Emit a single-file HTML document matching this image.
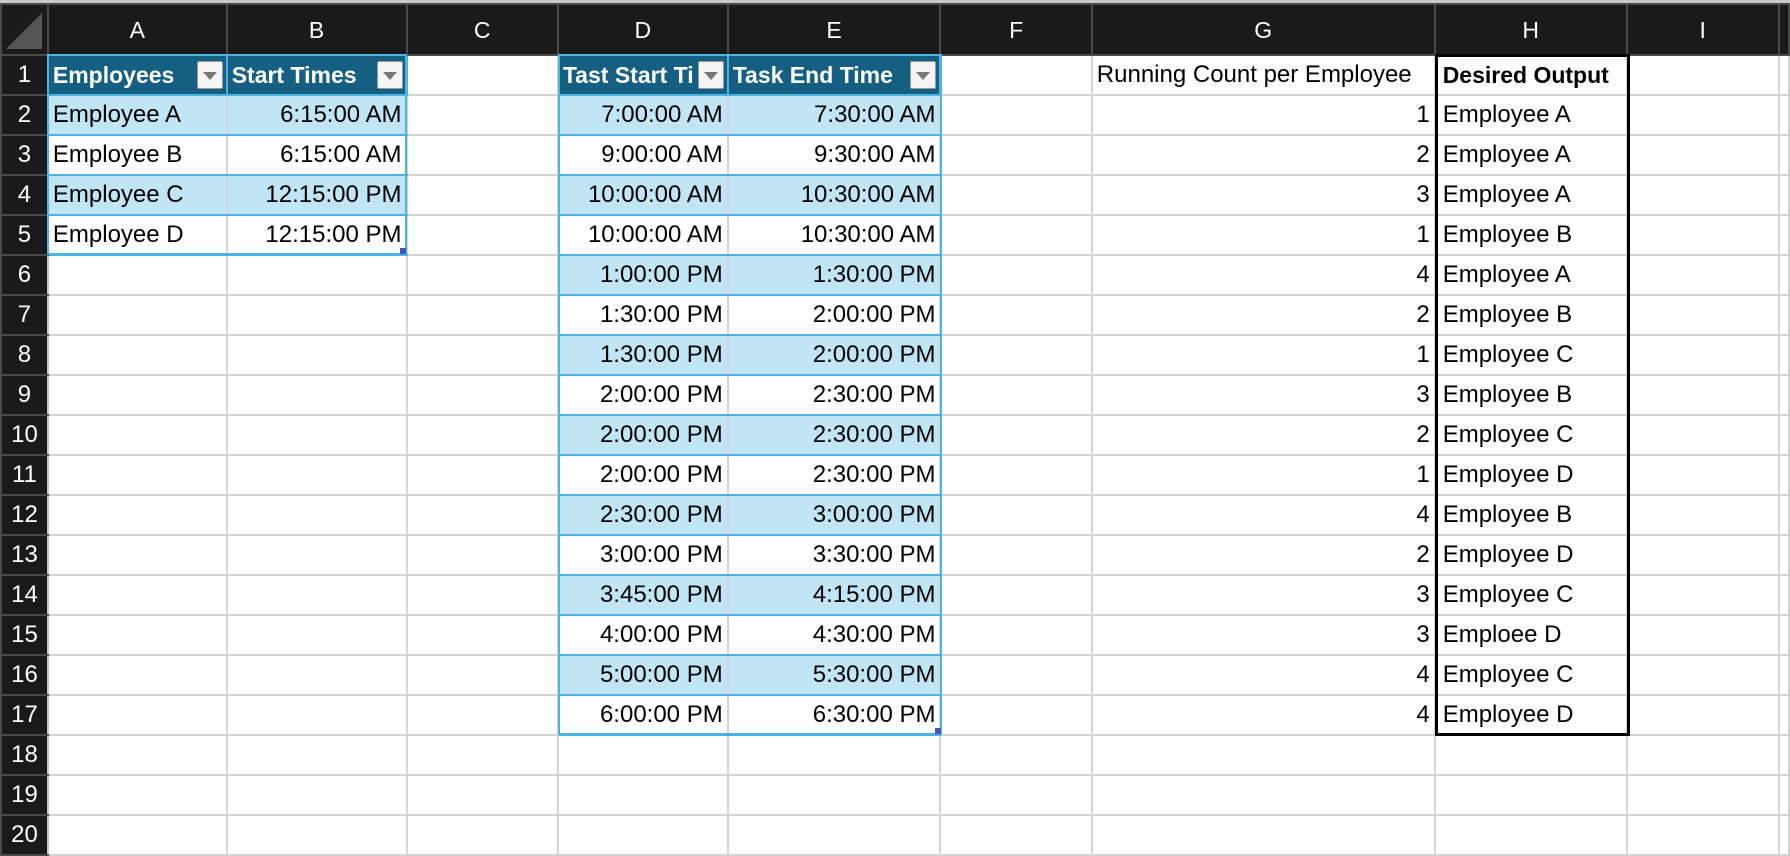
<!DOCTYPE html>
<html><head><meta charset="utf-8"><style>
body{margin:0;width:1790px;height:822px;overflow:hidden;background:#fff;font-family:"Liberation Sans Narrow","Liberation Sans",sans-serif;font-size:24px;color:#000;position:relative}
.topband{position:absolute;left:0;top:0;width:1790px;height:3px;background:#c8c8c8}
table{position:absolute;left:0;top:3px;border-collapse:collapse;table-layout:fixed}
td{border:2px solid #d4d4d4;height:38px;padding:0 4px;white-space:nowrap;overflow:hidden;line-height:38px;box-sizing:border-box}
tr{height:40px}
tr.h{height:51px}
tr.h td{background:#1a1a1a;color:#fff;border:2px solid #4a4a4a;height:51px;text-align:center;font-family:"Liberation Sans",sans-serif;font-size:23px}
td.rh{background:#1a1a1a;color:#fff;border-color:#4a4a4a #c8c8c8 #4a4a4a #4a4a4a;text-align:center;font-family:"Liberation Sans",sans-serif;font-size:24px;padding:0}
.r{text-align:right}
.b{background:#c0e6f5}
.t{border-bottom-color:#4db3e0;border-top-color:#4db3e0}
.th{background:#156082;color:#fff;font-weight:bold;font-size:23px;border-color:#4db3e0;position:relative}
.hc{padding-left:7px}
.f{position:absolute;right:3px;top:5px;width:24px;height:26px;background:#f4f4f4;border:1px solid #999;border-radius:2px}
.f:after{content:"";position:absolute;left:5px;top:10px;border-left:7px solid transparent;border-right:7px solid transparent;border-top:8px solid #777}
.ov{position:absolute;box-sizing:border-box}
.corner{position:absolute;left:4px;top:8px;width:0;height:0;border-left:36px solid transparent;border-bottom:36px solid #555}
</style></head><body>
<div class="topband"></div>
<table>
<colgroup><col style="width:47px"><col style="width:179px"><col style="width:180px"><col style="width:152px"><col style="width:170px"><col style="width:213px"><col style="width:152px"><col style="width:343px"><col style="width:192px"><col style="width:153px"><col style="width:9px"></colgroup>
<tr class="h"><td style="position:relative"><div class="corner"></div></td><td>A</td><td>B</td><td>C</td><td>D</td><td>E</td><td>F</td><td>G</td><td>H</td><td>I</td><td></td></tr>
<tr><td class="rh">1</td><td class="th">Employees<span class="f"></span></td><td class="th">Start Times<span class="f"></span></td><td></td><td class="th">Tast Start Ti<span class="f"></span></td><td class="th">Task End Time<span class="f"></span></td><td></td><td>Running Count per Employee</td><td class="hc" style="font-weight:bold;font-size:23px">Desired Output</td><td></td><td></td></tr>
<tr><td class="rh">2</td><td class="b t">Employee A</td><td class="b t r">6:15:00 AM</td><td></td><td class="b t r">7:00:00 AM</td><td class="b t r">7:30:00 AM</td><td></td><td class="r">1</td><td class="hc">Employee A</td><td></td><td></td></tr>
<tr><td class="rh">3</td><td class="t">Employee B</td><td class="t r">6:15:00 AM</td><td></td><td class="t r">9:00:00 AM</td><td class="t r">9:30:00 AM</td><td></td><td class="r">2</td><td class="hc">Employee A</td><td></td><td></td></tr>
<tr><td class="rh">4</td><td class="b t">Employee C</td><td class="b t r">12:15:00 PM</td><td></td><td class="b t r">10:00:00 AM</td><td class="b t r">10:30:00 AM</td><td></td><td class="r">3</td><td class="hc">Employee A</td><td></td><td></td></tr>
<tr><td class="rh">5</td><td class="t">Employee D</td><td class="t r">12:15:00 PM</td><td></td><td class="t r">10:00:00 AM</td><td class="t r">10:30:00 AM</td><td></td><td class="r">1</td><td class="hc">Employee B</td><td></td><td></td></tr>
<tr><td class="rh">6</td><td></td><td></td><td></td><td class="b t r">1:00:00 PM</td><td class="b t r">1:30:00 PM</td><td></td><td class="r">4</td><td class="hc">Employee A</td><td></td><td></td></tr>
<tr><td class="rh">7</td><td></td><td></td><td></td><td class="t r">1:30:00 PM</td><td class="t r">2:00:00 PM</td><td></td><td class="r">2</td><td class="hc">Employee B</td><td></td><td></td></tr>
<tr><td class="rh">8</td><td></td><td></td><td></td><td class="b t r">1:30:00 PM</td><td class="b t r">2:00:00 PM</td><td></td><td class="r">1</td><td class="hc">Employee C</td><td></td><td></td></tr>
<tr><td class="rh">9</td><td></td><td></td><td></td><td class="t r">2:00:00 PM</td><td class="t r">2:30:00 PM</td><td></td><td class="r">3</td><td class="hc">Employee B</td><td></td><td></td></tr>
<tr><td class="rh">10</td><td></td><td></td><td></td><td class="b t r">2:00:00 PM</td><td class="b t r">2:30:00 PM</td><td></td><td class="r">2</td><td class="hc">Employee C</td><td></td><td></td></tr>
<tr><td class="rh">11</td><td></td><td></td><td></td><td class="t r">2:00:00 PM</td><td class="t r">2:30:00 PM</td><td></td><td class="r">1</td><td class="hc">Employee D</td><td></td><td></td></tr>
<tr><td class="rh">12</td><td></td><td></td><td></td><td class="b t r">2:30:00 PM</td><td class="b t r">3:00:00 PM</td><td></td><td class="r">4</td><td class="hc">Employee B</td><td></td><td></td></tr>
<tr><td class="rh">13</td><td></td><td></td><td></td><td class="t r">3:00:00 PM</td><td class="t r">3:30:00 PM</td><td></td><td class="r">2</td><td class="hc">Employee D</td><td></td><td></td></tr>
<tr><td class="rh">14</td><td></td><td></td><td></td><td class="b t r">3:45:00 PM</td><td class="b t r">4:15:00 PM</td><td></td><td class="r">3</td><td class="hc">Employee C</td><td></td><td></td></tr>
<tr><td class="rh">15</td><td></td><td></td><td></td><td class="t r">4:00:00 PM</td><td class="t r">4:30:00 PM</td><td></td><td class="r">3</td><td class="hc">Emploee D</td><td></td><td></td></tr>
<tr><td class="rh">16</td><td></td><td></td><td></td><td class="b t r">5:00:00 PM</td><td class="b t r">5:30:00 PM</td><td></td><td class="r">4</td><td class="hc">Employee C</td><td></td><td></td></tr>
<tr><td class="rh">17</td><td></td><td></td><td></td><td class="t r">6:00:00 PM</td><td class="t r">6:30:00 PM</td><td></td><td class="r">4</td><td class="hc">Employee D</td><td></td><td></td></tr>
<tr><td class="rh">18</td><td></td><td></td><td></td><td></td><td></td><td></td><td></td><td></td><td></td><td></td></tr>
<tr><td class="rh">19</td><td></td><td></td><td></td><td></td><td></td><td></td><td></td><td></td><td></td><td></td></tr>
<tr><td class="rh">20</td><td></td><td></td><td></td><td></td><td></td><td></td><td></td><td></td><td></td><td></td></tr>
</table>
<div class="ov" style="left:47px;top:54px;width:360px;height:201px;border:2px solid #4db3e0"></div>
<div class="ov" style="left:558px;top:54px;width:384px;height:681px;border:2px solid #4db3e0"></div>
<div class="ov" style="left:400px;top:248px;width:6px;height:6px;background:#4654c0"></div>
<div class="ov" style="left:935px;top:728px;width:6px;height:6px;background:#4654c0"></div>
<div class="ov" style="left:1435px;top:54px;width:195px;height:682px;border:3px solid #000"></div>
</body></html>
